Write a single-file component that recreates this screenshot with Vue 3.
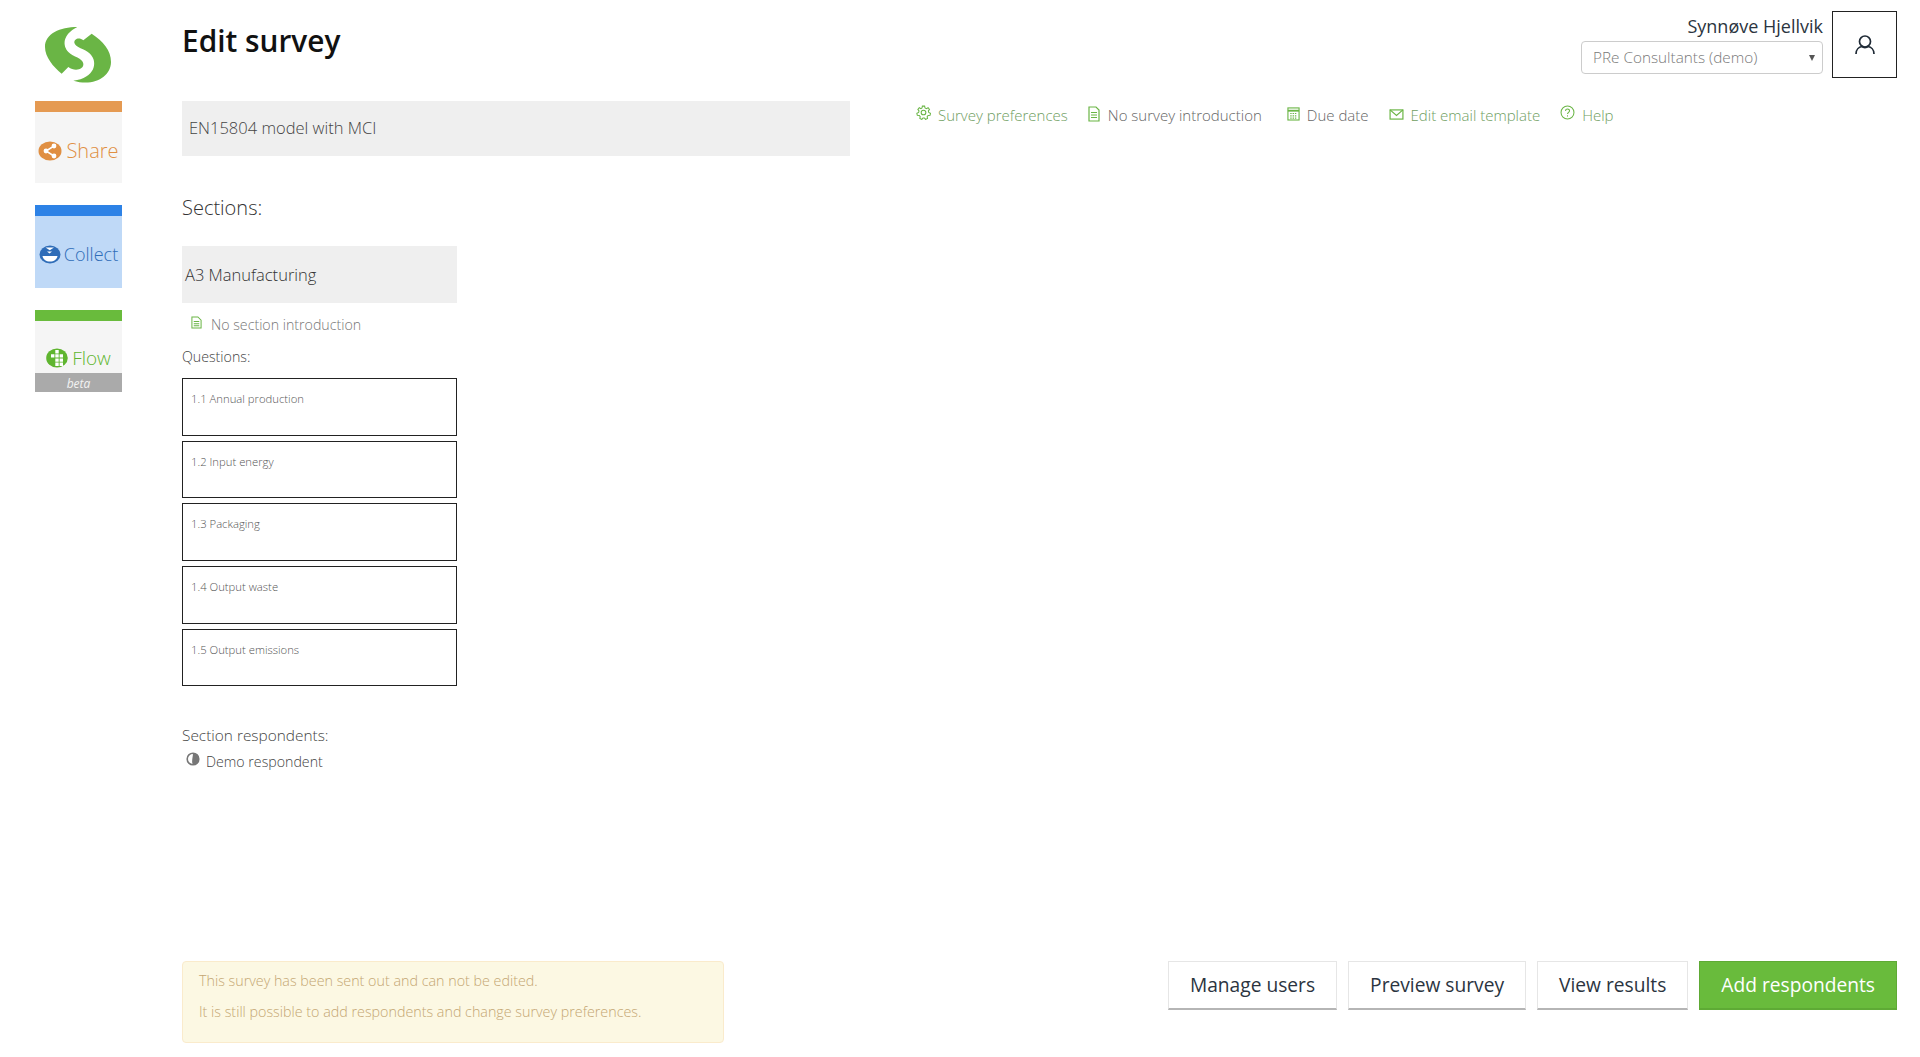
<script setup>
const tiles = [
  { key: 'share', label: 'Share' },
  { key: 'collect', label: 'Collect' },
  { key: 'flow', label: 'Flow' },
]
const questions = ['1.1 Annual production', '1.2 Input energy', '1.3 Packaging', '1.4 Output waste', '1.5 Output emissions']
</script>

<template>
  <div class="page">
    <aside class="side">
      <svg class="logo" viewBox="0 0 228 198" width="76" height="66">
        <path fill="#6ab545" d="M112 15C60 15 15 35 15 75C15 105 40 135 65 155L85 135C105 150 132 142 130 125C128 108 100 105 85 90C68 72 66 38 112 15Z" />
        <path fill="#6ab545" d="M155 35L130 55C118 44 102 50 103 62C105 76 135 80 150 95C175 120 165 168 100 176C160 195 213 165 213 120C213 85 190 58 155 35Z" />
      </svg>
      <a v-for="t in tiles" :key="t.key" class="tile" :class="t.key">
        <span class="band"></span>
        <span class="tile-label">
          <svg v-if="t.key === 'share'" class="ti" viewBox="0 0 24 20" width="24" height="20">
            <ellipse cx="12" cy="10" rx="11.500" ry="9.500" fill="currentColor" />
            <path d="M16 5L8 10L16 15" fill="none" stroke="#fff" stroke-width="1.500" />
            <circle cx="16" cy="5" r="2.400" fill="#fff" /><circle cx="8" cy="10" r="2.400" fill="#fff" /><circle cx="16" cy="15" r="2.400" fill="#fff" />
          </svg>
          <svg v-else-if="t.key === 'collect'" class="ti" viewBox="0 0 22 19" width="22" height="19">
            <ellipse cx="11" cy="9.500" rx="10.500" ry="9" fill="currentColor" />
            <path d="M3.500 11H18.500C18 14.500 15 16.500 11 16.500C7 16.500 4 14.500 3.500 11Z" fill="#fff" />
            <path d="M6.500 2.500H15L10.750 5.200ZM8 6.500H13L10.500 8.500Z" fill="#fff" />
          </svg>
          <svg v-else class="ti" viewBox="0 0 22 20" width="22" height="20">
            <ellipse cx="11" cy="10" rx="10.800" ry="9.600" fill="currentColor" />
            <path fill="#fff" d="M9.300 2h3.400v3.400h-3.400zM5 6.200h3.400v3.400H5zM9.300 6.200h3.400v3.400h-3.400zM13.600 6.200h3.400v3.400h-3.400zM9.300 10.400h3.400v3.400h-3.400zM13.600 10.400h3.400v3.400h-3.400zM9.300 14.600h3.400v3.400h-3.400zM13.600 14.600h3.400v3.400h-3.400z" />
          </svg>
          {{ t.label }}
        </span>
        <span v-if="t.key === 'flow'" class="beta">beta</span>
      </a>
    </aside>

    <main class="main">
      <header class="head">
        <h1>Edit survey</h1>
        <div class="user">
          <div class="user-info">
            <div class="user-name">Synnøve Hjellvik</div>
            <div class="select">PRe Consultants (demo)<span class="caret"></span></div>
          </div>
          <div class="avatar">
            <svg viewBox="0 0 22 22" width="22" height="22" fill="none" stroke="#1f2a36" stroke-width="1.700">
              <circle cx="11" cy="7.500" r="5.500" />
              <path d="M2 20C2 15.500 5 13 8 12.500C9.500 14 12.500 14 14 12.500C17 13 20 15.500 20 20" />
            </svg>
          </div>
        </div>
      </header>

      <div class="survey-row">
        <div class="survey-name">EN15804 model with MCI</div>
        <nav class="links">
          <a class="link green">
            <svg viewBox="0 0 16 16" width="15" height="15" fill="none" stroke="#6ab545" stroke-width="1.100"><circle cx="8" cy="8" r="2.500" /><path d="M6.800 1.200h2.400l.4 2 1.500.7 1.800-1 1.500 1.800-1.200 1.600.4 1.600 1.900.9-.5 2.200-2.100.1-1 1.300.4 2-2.100 1-1.300-1.600H7.500l-1.300 1.600-2.100-1 .4-2-1-1.300-2.100-.1-.5-2.200 1.900-.9.400-1.600L2 4.700l1.500-1.800 1.800 1 1.100-.7z" /></svg>
            <span>Survey preferences</span>
          </a>
          <a class="link grey wide">
            <svg class="ic-doc" viewBox="0 0 12 16" width="12" height="16" fill="#fff" stroke="#6ab545" stroke-width="1.200"><path d="M1 1h7l3 3v11H1z" /><path d="M3 6.500h6M3 9h6M3 11.500h6" /></svg>
            <span>No survey introduction</span>
          </a>
          <a class="link grey">
            <svg class="ic-cal" viewBox="0 0 14 16" width="13" height="15" fill="none" stroke="#6ab545" stroke-width="1.200"><rect x="1" y="2" width="12" height="13" /><path d="M1 5h12" stroke-width="2" /><path d="M3.500 8h7M3.500 10.500h7M3.500 13h7" stroke-dasharray="1.500 1" /></svg>
            <span>Due date</span>
          </a>
          <a class="link green">
            <svg class="ic-mail" viewBox="0 0 16 12" width="15" height="11" fill="none" stroke="#6ab545" stroke-width="1.300"><rect x="1" y="1" width="14" height="10" /><path d="M1 1l7 6 7-6" /></svg>
            <span>Edit email template</span>
          </a>
          <a class="link green">
            <svg viewBox="0 0 16 16" width="15" height="15" fill="none" stroke="#6ab545" stroke-width="1.100"><circle cx="8" cy="8" r="6.900" /><path d="M5.900 6.300C5.900 3.700 10.200 3.700 10.200 6.200C10.200 7.800 8 7.800 8 9.600" /><path d="M8 11v1.300" /></svg>
            <span>Help</span>
          </a>
        </nav>
      </div>

      <h2 class="sections">Sections:</h2>

      <section class="section">
        <div class="section-name">A3 Manufacturing</div>
        <div class="section-intro">
          <svg viewBox="0 0 12 14" width="11" height="13" fill="#fff" stroke="#6ab545" stroke-width="1.100"><path d="M1 1h6.500L11 4.500V13H1z" /><path d="M3 6h6M3 8.300h6M3 10.600h6" /></svg>
          <span>No section introduction</span>
        </div>
        <div class="q-title">Questions:</div>
        <div class="q-list">
          <div v-for="q in questions" :key="q" class="q">{{ q }}</div>
        </div>
      </section>

      <div class="resp-title">Section respondents:</div>
      <div class="resp">
        <svg viewBox="0 0 14 14" width="14" height="14"><circle cx="7" cy="7" r="5.800" fill="#fff" stroke="#777" stroke-width="1.600" /><path d="M7 1.200A5.800 5.800 0 0 1 7 12.800C5 10 7 5 7 1.200Z" fill="#777" /></svg>
        <span>Demo respondent</span>
      </div>

      <footer class="foot">
        <div class="alert">
          <p>This survey has been sent out and can not be edited.</p>
          <p>It is still possible to add respondents and change survey preferences.</p>
        </div>
        <div class="actions">
          <button class="btn">Manage users</button>
          <button class="btn">Preview survey</button>
          <button class="btn">View results</button>
          <button class="btn primary">Add respondents</button>
        </div>
      </footer>
    </main>
  </div>
</template>

<style>
html, body { margin: 0; background: #fff; }
</style>

<style scoped>
.page {
  display: flex;
  height: 1057px;
  box-sizing: border-box;
  font-family: "Open Sans", "Liberation Sans", sans-serif;
  font-weight: 300;
  color: #333;
  overflow: hidden;
}
.side {
  width: 182px;
  flex: none;
  box-sizing: border-box;
  padding: 22px 0 0 35px;
  display: flex;
  flex-direction: column;
  align-items: flex-start;
}
.logo { margin: 0 0 13px 5px; display: block; }
.tile {
  width: 87px;
  height: 82px;
  margin-bottom: 22px;
  background: #f5f5f5;
  display: flex;
  flex-direction: column;
  position: relative;
}
.band { height: 11px; flex: none; }
.tile-label {
  display: flex;
  align-items: center;
  justify-content: center;
  gap: 4px;
  line-height: 24px;
  margin-top: 27px;
}
.ti { flex: none; }
.share { color: #e08f42; font-size: 20px; }
.share .band { background: #e59a52; }
.collect { color: #2f6db8; background: #bfd9f7; height: 83px; font-size: 18px; }
.collect .band { background: #2d82e6; }
.collect .tile-label { gap: 3px; margin-top: 26px; }
.flow { color: #5fb52f; margin-bottom: 0; font-size: 19px; }
.flow .band { background: #69bb3c; }
.flow .tile-label { margin-top: 25px; }
.beta {
  position: absolute;
  left: 0; right: 0; bottom: 0;
  height: 19px;
  background: #aaa;
  color: #f2f2f2;
  font-size: 12px;
  font-style: italic;
  font-weight: 400;
  line-height: 22px;
  text-align: center;
}

.main {
  flex: 1;
  min-width: 0;
  padding-right: 23px;
  display: flex;
  flex-direction: column;
}
.head {
  height: 101px;
  flex: none;
  display: flex;
  justify-content: space-between;
  align-items: flex-start;
}
h1 {
  margin: 21px 0 0;
  font-size: 29.800px;
  line-height: 40px;
  font-weight: 600;
  color: #111;
}
.user { display: flex; gap: 9px; margin-top: 11px; }
.user-info { width: 242px; }
.user-name {
  font-size: 18px;
  font-weight: 400;
  line-height: 24px;
  text-align: right;
  color: #2b3440;
  margin-top: 3px;
}
.select {
  margin-top: 3px;
  height: 33px;
  box-sizing: border-box;
  border: 1px solid #ccc;
  border-radius: 4px;
  padding-left: 11px;
  font-size: 15.300px;
  line-height: 31px;
  color: #7a7a7a;
  position: relative;
}
.caret {
  position: absolute;
  right: 7px;
  top: 13px;
  border-left: 3px solid transparent;
  border-right: 3px solid transparent;
  border-top: 6px solid #555;
}
.avatar {
  width: 65px;
  height: 67px;
  box-sizing: border-box;
  border: 1px solid #222;
  display: flex;
  align-items: center;
  justify-content: center;
}

.survey-row { display: flex; flex: none; }
.survey-name {
  width: 668px;
  height: 55px;
  background: #efefef;
  padding-left: 7px;
  box-sizing: border-box;
  font-size: 16.500px;
  line-height: 54px;
  color: #444;
}
.links { display: flex; margin-left: 66px; margin-top: 2px; height: 24px; }
.link {
  display: flex;
  align-items: flex-start;
  font-size: 15px;
  line-height: 24px;
  margin-right: 20px;
}
.wide { margin-right: 25px; }
.link svg { flex: none; margin-top: 2px; margin-right: 7px; }
.link .ic-doc { margin-top: 3px; margin-right: 8px; }
.link .ic-cal { margin-top: 3px; }
.link .ic-mail { margin-top: 6px; }
.green { color: #6f9e5f; }
.grey { color: #666; }

.sections {
  margin: 36px 0 0;
  font-size: 20px;
  line-height: 32px;
  font-weight: 300;
  color: #333;
  flex: none;
}
.section { width: 275px; margin-top: 22px; flex: none; }
.section-name {
  height: 57px;
  background: #efefef;
  padding-left: 3px;
  font-size: 16.500px;
  line-height: 58px;
  color: #333;
}
.section-intro {
  display: flex;
  align-items: flex-start;
  height: 24px;
  margin-top: 10px;
  padding-left: 9px;
  font-size: 14.200px;
  line-height: 24px;
  color: #777;
}
.section-intro svg { margin-top: 3px; margin-right: 9px; flex: none; }
.q-title {
  margin-top: 8px;
  font-size: 14.200px;
  line-height: 24px;
  color: #444;
}
.q-list { margin-top: 9px; display: flex; flex-direction: column; gap: 5px; }
.q {
  height: 57.700px;
  box-sizing: border-box;
  border: 1px solid #222;
  padding: 12px 8px 0;
  font-size: 11.300px;
  line-height: 16px;
  color: #555;
}
.resp-title {
  margin-top: 38px;
  font-size: 15.400px;
  line-height: 24px;
  color: #444;
  flex: none;
}
.resp {
  display: flex;
  align-items: flex-start;
  padding-left: 4px;
  font-size: 14.200px;
  line-height: 24px;
  color: #444;
  margin-top: 2px;
  flex: none;
}
.resp svg { margin-top: 2px; margin-right: 6px; flex: none; }

.foot {
  margin-top: auto;
  margin-bottom: 14px;
  display: flex;
  justify-content: space-between;
  align-items: flex-start;
  flex: none;
}
.alert {
  width: 542px;
  height: 82px;
  box-sizing: border-box;
  background: #fcf8e3;
  border: 1px solid #faebcc;
  border-radius: 4px;
  padding: 9px 16px 0;
  color: #c4a672;
  font-size: 14.300px;
  line-height: 20px;
  font-weight: 300;
}
.alert p { margin: 0 0 11px; }
.actions { display: flex; gap: 11px; }
.btn {
  height: 49px;
  padding: 0 21px 2px;
  box-sizing: border-box;
  background: #fff;
  border: 1px solid #e6e6e6;
  border-bottom: 2px solid #b5b5b5;
  font-family: inherit;
  font-size: 19.200px;
  color: #2b3440;
  cursor: pointer;
}
.primary {
  background: #69bb3c;
  color: #fff;
  border-color: #5eaa35;
}
</style>
